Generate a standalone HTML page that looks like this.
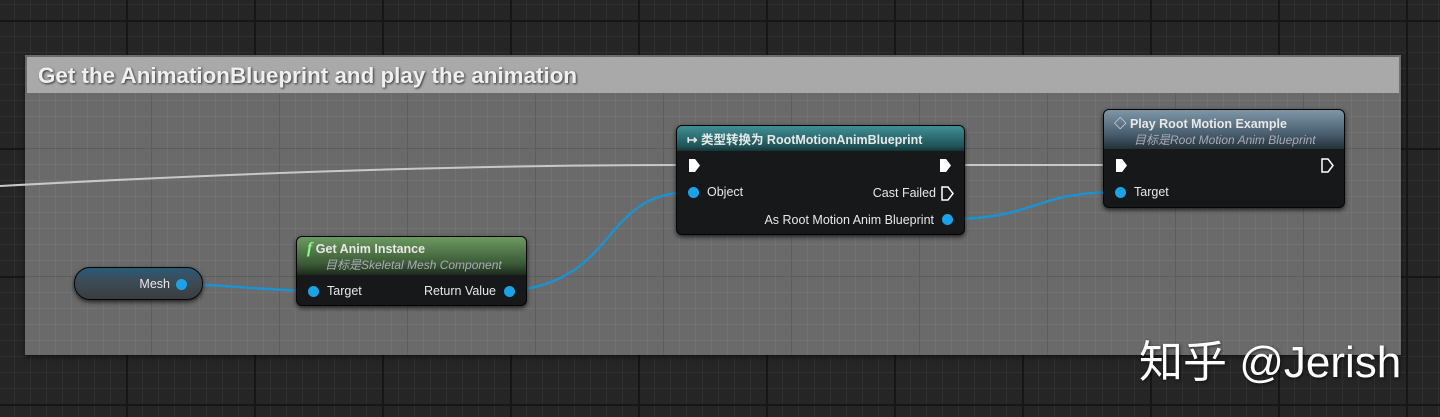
<!DOCTYPE html>
<html><head><meta charset="utf-8"><style>
*{margin:0;padding:0;box-sizing:border-box}
body{width:1440px;height:417px;overflow:hidden;position:relative;font-family:"Liberation Sans","Noto Sans CJK SC",sans-serif;
background-color:#252525;
background-image:linear-gradient(90deg,#161616 2px,transparent 2px),linear-gradient(#161616 2px,transparent 2px),linear-gradient(90deg,#303030 1px,transparent 1px),linear-gradient(#303030 1px,transparent 1px);
background-size:128px 128px,128px 128px,16px 16px,16px 16px;background-position:-2px 20px,-2px 20px,-2px 4px,-2px 4px}
.cm{position:absolute;left:25px;top:55px;width:1376px;height:300px;background-color:#6a6a6a;
background-image:linear-gradient(90deg,#5e5e5e 1px,transparent 1px),linear-gradient(#5e5e5e 1px,transparent 1px),linear-gradient(90deg,#727272 1px,transparent 1px),linear-gradient(#727272 1px,transparent 1px);
background-size:128px 128px,128px 128px,16px 16px,16px 16px;background-position:-2px -35px,-2px -35px,-2px -3px,-2px -3px;box-shadow:0 2px 4px rgba(0,0,0,.6)}
.cmh{position:absolute;left:2px;top:2px;right:2px;height:36px;background:#a9a9a9;color:#f0f0f0;font-weight:bold;font-size:22.4px;padding:6px 0 0 11px;text-shadow:1px 1px 2px #333;white-space:nowrap}
.node{position:absolute;background:#171819;border-radius:6px;border:1px solid #050505;box-shadow:0 2px 5px rgba(0,0,0,.7);color:#e8e8e8;font-size:13px}
.hd{border-radius:5px 5px 0 0;padding:3px 0 0 10px;font-weight:bold;font-size:12.5px}
.sub{font-weight:normal;font-style:italic;color:#aab;font-size:12px;padding-left:20px}
.t{position:absolute;font-size:12.5px;white-space:nowrap}
.pin{position:absolute;width:11px;height:11px;border-radius:50%;background:#1ba3e8}
.ex{position:absolute;width:11px;height:13px;background:#fff;clip-path:polygon(0 0,55% 0,100% 50%,55% 100%,0 100%)}
</style></head><body>
<div class="cm"><div class="cmh">Get the AnimationBlueprint and play the animation</div></div>
<svg style="position:absolute;left:0;top:0" width="1440" height="417">
<path d="M0 186 C200 175 450 165 680 165" stroke="#c8c8c8" stroke-width="2" fill="none"/>
<path d="M960 165 L1110 165" stroke="#c8c8c8" stroke-width="2" fill="none"/>
<path d="M185 284 C240 286 260 290 313 291" stroke="#1a93d0" stroke-width="2.5" fill="none"/>
<path d="M512 291 C620 280 600 192 692 192" stroke="#1a93d0" stroke-width="2.5" fill="none"/>
<path d="M947 219 C1040 219 1030 192 1120 192" stroke="#1a93d0" stroke-width="2.5" fill="none"/>
</svg>
<div class="node" style="left:74px;top:267px;width:129px;height:33px;border-radius:16px;background:linear-gradient(#2a5a78 0%,#3d4c58 40%,#3a3d40 100%)">
<span class="t" style="right:32px;top:9px">Mesh</span><div class="pin" style="right:15px;top:11px"></div></div>
<div class="node" style="left:296px;top:236px;width:231px;height:70px">
<div class="hd" style="height:38px;background:linear-gradient(#6c9a60,#3b5a36 70%,#1d2a1c)"><span style="color:#8f8;font-style:italic;font-family:'Liberation Serif',serif;font-size:16px">f</span> Get Anim Instance<div class="sub" style="padding-left:18px;margin-top:-2px">目标是Skeletal Mesh Component</div></div>
<div class="pin" style="left:11px;top:49px"></div><span class="t" style="left:30px;top:47px">Target</span>
<span class="t" style="right:30px;top:47px">Return Value</span><div class="pin" style="right:11px;top:49px"></div></div>
<div class="node" style="left:676px;top:125px;width:289px;height:110px">
<div class="hd" style="height:25px;background:linear-gradient(#3f8f96,#1f5558 80%,#183335)">↦ 类型转换为 RootMotionAnimBlueprint</div>
<div class="ex" style="left:12px;top:33px"></div><div class="ex" style="right:13px;top:33px"></div>
<div class="pin" style="left:11px;top:61px"></div><span class="t" style="left:30px;top:59px">Object</span>
<span class="t" style="right:28px;top:60px">Cast Failed</span>
<div style="position:absolute;right:10px;top:60px"><svg width="13" height="15"><path d="M1 1h6l5 6.5-5 6.5H1z" stroke="#fff" stroke-width="1.5" fill="none"/></svg></div>
<span class="t" style="right:30px;top:87px">As Root Motion Anim Blueprint</span><div class="pin" style="right:11px;top:88px"></div></div>
<div class="node" style="left:1103px;top:109px;width:242px;height:99px">
<div class="hd" style="height:39px;background:linear-gradient(#7d96a8,#4a6070 60%,#233038)">◇ Play Root Motion Example<div class="sub" style="margin-top:-1px">目标是Root Motion Anim Blueprint</div></div>
<div class="ex" style="left:12px;top:49px"></div>
<div style="position:absolute;right:10px;top:48px"><svg width="13" height="15"><path d="M1 1h6l5 6.5-5 6.5H1z" stroke="#fff" stroke-width="1.5" fill="none"/></svg></div>
<div class="pin" style="left:11px;top:77px"></div><span class="t" style="left:30px;top:75px">Target</span></div>
<div style="position:absolute;left:1139px;top:326px;color:#fff;font-size:44px;font-family:'Liberation Sans','Noto Sans CJK SC',sans-serif;text-shadow:1px 1px 3px rgba(0,0,0,.6);white-space:nowrap">知乎 @Jerish</div>
</body></html>
